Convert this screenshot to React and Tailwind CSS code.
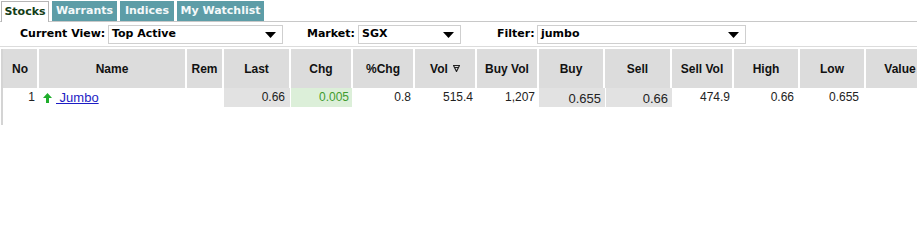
import React from "react";

const tabs = [
  { t: "Stocks", w: "w-[48px]" },
  { t: "Warrants", w: "w-[65px]" },
  { t: "Indices", w: "w-[54px]" },
  { t: "My Watchlist", w: "w-[87px]" },
];

const cols = [
  { key: "no", title: "No", w: "w-[36px]" },
  { key: "name", title: "Name", w: "w-[148px]" },
  { key: "rem", title: "Rem", w: "w-[37px]" },
  { key: "last", title: "Last", w: "w-[67px]" },
  { key: "chg", title: "Chg", w: "w-[62px]" },
  { key: "pchg", title: "%Chg", w: "w-[62px]" },
  { key: "vol", title: "Vol", w: "w-[62px]" },
  { key: "buyvol", title: "Buy Vol", w: "w-[62px]" },
  { key: "buy", title: "Buy", w: "w-[66px]" },
  { key: "sell", title: "Sell", w: "w-[67px]" },
  { key: "sellvol", title: "Sell Vol", w: "w-[62px]" },
  { key: "high", title: "High", w: "w-[66px]" },
  { key: "low", title: "Low", w: "w-[66px]" },
  { key: "value", title: "Value", w: "w-[70px]" },
];

const Select = ({ value, width }) => (
  <div
    className={`flex items-center justify-between h-[19px] ${width} shrink-0 border border-[#cfcfcf] bg-white pl-[3px] pr-[6px]`}
  >
    <span className="text-[11px] font-bold text-black">{value}</span>
    <svg width="11" height="6" viewBox="0 0 11 6">
      <polygon points="0,0 11,0 5.5,6" fill="#000" />
    </svg>
  </div>
);

export default function App() {
  return (
    <div className="w-[917px] h-[227px] bg-white overflow-hidden font-['DejaVu_Sans',Verdana,sans-serif]">
      {/* tab strip */}
      <div className="flex items-end gap-[3px] pl-[1px] pt-[1px] h-[22px] border-b border-[#c8c8c8]">
        {tabs.map((tab, i) =>
          i === 0 ? (
            <div
              key={tab.t}
              className={`${tab.w} h-[21px] flex items-center justify-center bg-white border border-b-0 border-[#b5b5b5] text-[11px] font-bold text-[#133d17] -mb-px`}
            >
              {tab.t}
            </div>
          ) : (
            <div
              key={tab.t}
              className={`${tab.w} h-[20px] flex items-center justify-center bg-[#5d9da7] text-[11px] font-bold text-[#f4f9fa]`}
            >
              {tab.t}
            </div>
          )
        )}
      </div>

      {/* filters */}
      <div className="flex items-center h-[25px] pt-[1px] border-b border-[#dcdcdc]">
        <span className="ml-[20px] w-[88px] shrink-0 text-[11px] font-bold text-black">
          Current View:
        </span>
        <Select value="Top Active" width="w-[175px]" />
        <span className="ml-[24px] w-[51px] shrink-0 text-[11px] font-bold text-black">
          Market:
        </span>
        <Select value="SGX" width="w-[103px]" />
        <span className="ml-[36px] w-[40px] shrink-0 text-[11px] font-bold text-black">
          Filter:
        </span>
        <Select value="jumbo" width="w-[209px]" />
      </div>

      {/* table */}
      <div className="mt-[2px] ml-[1px] border-l-2 border-[#d4d4d4] h-[76px] font-['Liberation_Sans',Arial,sans-serif]">
        <div className="flex h-[39px]">
          {cols.map((c) => (
            <div
              key={c.key}
              className={`${c.w} shrink-0 h-full bg-[#dcdcdc] border-r-2 border-white flex items-center justify-center text-[12px] font-bold text-[#111]`}
            >
              {c.title}
              {c.key === "vol" && (
                <svg className="ml-[5px]" width="7" height="7" viewBox="0 0 7 7">
                  <polygon
                    points="0.5,0.5 6.5,0.5 3.5,6.5"
                    fill="none"
                    stroke="#222"
                    strokeWidth="1.2"
                  />
                  <line x1="1.5" y1="2.5" x2="5.5" y2="2.5" stroke="#222" strokeWidth="1" />
                </svg>
              )}
            </div>
          ))}
        </div>
        <div className="flex h-[19px] text-[12px] text-[#222]">
          <div className="w-[36px] shrink-0 text-right pr-[4px] leading-[19px]">1</div>
          <div className="w-[148px] shrink-0 flex items-center pl-[4px]">
            <svg width="9" height="10" viewBox="0 0 9 10" className="mr-[4px]">
              <polygon points="4.5,0 9,5 6,5 6,10 3,10 3,5 0,5" fill="#1fae2c" />
            </svg>
            <span className="text-[#1c1cc4] underline text-[13px]">&nbsp;Jumbo</span>
          </div>
          <div className="w-[37px] shrink-0" />
          <div className="w-[66px] shrink-0 bg-[#e2e2e2] text-right pr-[5px] leading-[19px]">0.66</div>
          <div className="w-[1px] shrink-0" />
          <div className="w-[61px] shrink-0 bg-[#dcefd9] text-right pr-[3px] leading-[19px] text-[#3f9c2e]">
            0.005
          </div>
          <div className="w-[1px] shrink-0" />
          <div className="w-[62px] shrink-0 text-right pr-[4px] leading-[19px]">0.8</div>
          <div className="w-[62px] shrink-0 text-right pr-[4px] leading-[19px]">515.4</div>
          <div className="w-[62px] shrink-0 text-right pr-[4px] leading-[19px]">1,207</div>
          <div className="w-[66px] shrink-0 bg-[#e2e2e2] text-right pr-[4px] leading-[22px] text-[13px]">
            0.655
          </div>
          <div className="w-[1px] shrink-0" />
          <div className="w-[66px] shrink-0 bg-[#e2e2e2] text-right pr-[4px] leading-[22px] text-[13px]">
            0.66
          </div>
          <div className="w-[62px] shrink-0 text-right pr-[4px] leading-[19px]">474.9</div>
          <div className="w-[66px] shrink-0 text-right pr-[6px] leading-[19px]">0.66</div>
          <div className="w-[66px] shrink-0 text-right pr-[7px] leading-[19px]">0.655</div>
          <div className="w-[70px] shrink-0 text-right leading-[19px]">
            <span className="relative left-[21px]">3</span>
          </div>
        </div>
      </div>
    </div>
  );
}
